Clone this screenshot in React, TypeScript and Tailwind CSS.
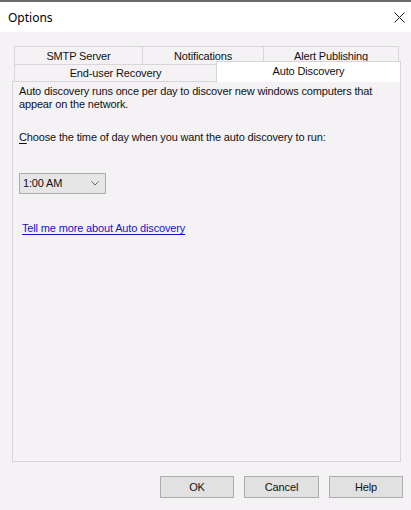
import React from "react";

const F = { fontFamily: '"Liberation Sans", Arial, sans-serif' };

export default function App() {
  return (
    <div
      className="w-[411px] h-[510px] bg-[#f5f2f5] flex flex-col text-[11px] leading-[13px] tracking-[-0.15px] text-[#111]"
      style={F}
    >
      <div className="h-[2px] bg-[#6b6b6b]" />
      <div className="h-[30px] bg-white flex items-center justify-between">
        <span
          className="ml-[8px] text-[12px] tracking-normal text-black"
          style={{ fontFamily: '"Noto Sans", "Open Sans", sans-serif' }}
        >
          Options
        </span>
        <svg width="11" height="11" viewBox="0 0 11 11" className="mr-[6px]">
          <path d="M0.5 0.5 L10.5 10.5 M10.5 0.5 L0.5 10.5" stroke="#222" strokeWidth="1" />
        </svg>
      </div>
      <div className="flex flex-col pl-[12px] pr-[10px] pt-[14px]">
        <div className="flex ml-[2px] h-[18px]">
          <div className="w-[128px] border-l border-t border-[#d6d6d6] flex items-center justify-center pt-[1px]">
            SMTP Server
          </div>
          <div className="w-[121px] border-l border-t border-[#d6d6d6] flex items-center justify-center pt-[1px]">
            Notifications
          </div>
          <div className="w-[136px] border-l border-t border-r border-[#d6d6d6] flex items-center justify-center pt-[1px]">
            Alert Publishing
          </div>
        </div>
        <div className="flex ml-[2px] h-[17px] items-end">
          <div className="w-[202px] h-[17px] border-l border-t border-[#d6d6d6] flex items-center justify-center">
            End-user Recovery
          </div>
          <div className="relative z-10 w-[185px] h-[21px] -mb-[1px] bg-white border-l border-t border-r border-[#d6d6d6] flex justify-center pt-[3px]">
            Auto Discovery
          </div>
        </div>
        <div className="h-[381px] border border-[#d6d6d6] pl-[6px] pt-[3px] flex flex-col items-start">
          <p>Auto discovery runs once per day to discover new windows computers that</p>
          <p>appear on the network.</p>
          <p className="mt-[20px]">
            <span className="underline underline-offset-2">C</span>hoose the time of day when you want the auto discovery to run:
          </p>
          <div className="mt-[29px] w-[87px] h-[21px] bg-[#e6e6e6] border border-[#acacac] flex items-center justify-between pl-[3px] pr-[6px]">
            <span>1:00 AM</span>
            <svg width="8" height="5" viewBox="0 0 8 5">
              <path d="M0.5 0.5 L4 4 L7.5 0.5" fill="none" stroke="#666" strokeWidth="1" />
            </svg>
          </div>
          <p className="mt-[28px] ml-[3px] text-[#1414c8] underline underline-offset-2">
            Tell me more about Auto discovery
          </p>
        </div>
        <div className="flex justify-end gap-[10px] mt-[14px] mr-[-2px]">
          <div className="w-[74px] h-[22px] bg-[#e1e1e1] border border-[#adadad] flex items-center justify-center">
            OK
          </div>
          <div className="w-[75px] h-[22px] bg-[#e1e1e1] border border-[#adadad] flex items-center justify-center">
            Cancel
          </div>
          <div className="w-[74px] h-[22px] bg-[#e1e1e1] border border-[#adadad] flex items-center justify-center">
            Help
          </div>
        </div>
      </div>
    </div>
  );
}
